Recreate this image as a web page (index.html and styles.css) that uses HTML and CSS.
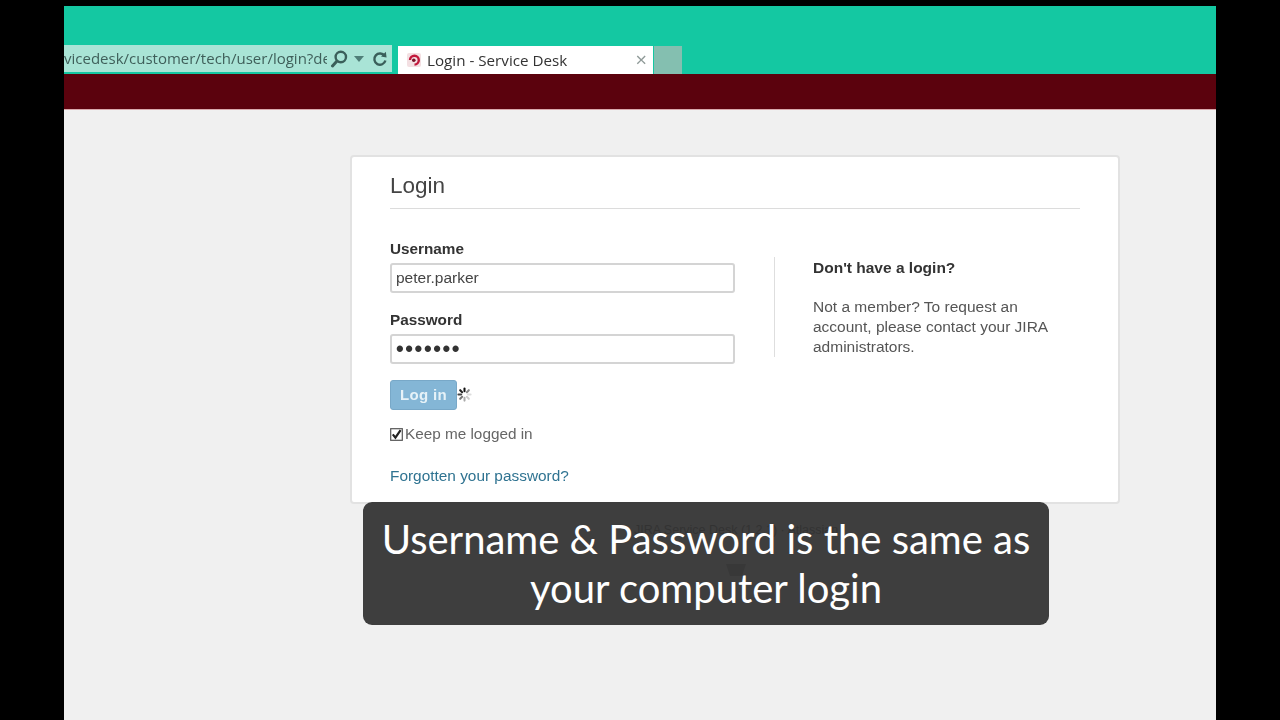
FILE: index.html
```html
<!DOCTYPE html>
<html lang="en">
<head>
<meta charset="utf-8">
<title>Login - Service Desk</title>
<link rel="stylesheet" href="styles.css">
</head>
<body>
<div class="frame">
  <header class="chrome">
    <div class="address">
      <span class="url">vicedesk/customer/tech/user/login?de</span>
      <svg class="ico search" viewBox="0 0 18 18"><circle cx="10.8" cy="7" r="5.2" fill="none" stroke="#3a5f5a" stroke-width="2.4"/><path d="M7 11 L2.5 16" stroke="#3a5f5a" stroke-width="3" stroke-linecap="round"/></svg>
      <svg class="ico caret" viewBox="0 0 10 6"><path d="M0 0 H10 L5 6 Z" fill="#4f7f78"/></svg>
      <svg class="ico reload" viewBox="0 0 16 16"><path d="M12.6 5 A5.6 5.6 0 1 0 13.4 9.5" fill="none" stroke="#3a5f5a" stroke-width="2.4"/><path d="M9 5.6 L14.6 6.4 L13.8 0.8 Z" fill="#3a5f5a"/></svg>
    </div>
    <div class="tab">
      <svg class="favicon" viewBox="0 0 14 14"><rect width="14" height="14" rx="2" fill="#f3dfe2"/><path d="M3 7 A4.4 4.4 0 1 1 7.5 11.6" fill="none" stroke="#c2183c" stroke-width="2.4"/><circle cx="6.8" cy="7.2" r="1.8" fill="#7a1228"/></svg>
      <span class="tab-title">Login - Service Desk</span>
      <span class="tab-close">×</span>
    </div>
    <div class="new-tab"></div>
  </header>
  <div class="brandbar"></div>
  <main class="page">
    <section class="card">
      <h1 class="title">Login</h1>
      <div class="columns">
        <form class="form">
          <label class="label">Username</label>
          <div class="input">peter.parker</div>
          <label class="label label-pw">Password</label>
          <div class="input dots">•••••••</div>
          <div class="actions">
            <span class="btn">Log in</span>
            <svg class="spinner" viewBox="0 0 16 16">
              <g stroke-width="2.2" stroke-linecap="round">
                <path d="M8 1.5 V4.5" stroke="#111"/>
                <path d="M3.4 3.4 L5.5 5.5" stroke="#222"/>
                <path d="M1.5 8 H4.5" stroke="#444"/>
                <path d="M3.4 12.6 L5.5 10.5" stroke="#777"/>
                <path d="M8 14.5 V11.5" stroke="#aaa"/>
                <path d="M12.6 12.6 L10.5 10.5" stroke="#ccc"/>
                <path d="M14.5 8 H11.5" stroke="#ddd"/>
                <path d="M12.6 3.4 L10.5 5.5" stroke="#888"/>
              </g>
            </svg>
          </div>
          <div class="keep">
            <svg class="check" viewBox="0 0 13 13"><rect x="0.7" y="0.7" width="11.6" height="11.6" fill="#fff" stroke="#555" stroke-width="1.2"/><path d="M2.8 6.4 L5.4 9.6 L10.6 2.2" fill="none" stroke="#222" stroke-width="2.2"/></svg>
            <span>Keep me logged in</span>
          </div>
          <a class="forgot">Forgotten your password?</a>
        </form>
        <aside class="side">
          <h2 class="side-h">Don't have a login?</h2>
          <p class="side-p">Not a member? To request an account, please contact your JIRA administrators.</p>
        </aside>
      </div>
    </section>
    <div class="footer-text">JIRA Service Desk (1.2.1) · Atlassian</div>
    <svg class="footer-logo" viewBox="0 0 24 16"><path d="M2 2 H22 L18 14 H6 Z" fill="#888"/></svg>
    <div class="caption">Username &amp; Password is the same as your computer login</div>
  </main>
</div>
</body>
</html>
```

FILE: styles.css
```css
* { box-sizing: border-box; }
html, body { margin: 0; height: 100%; }
body { background: #000; overflow: hidden; font-family: "Liberation Sans", Arial, sans-serif; }
.frame { margin: 0 64px; height: 720px; padding-top: 6px; display: flex; flex-direction: column; position: relative; }

.chrome { height: 68px; background: #14c8a2; display: flex; align-items: flex-end; flex: none; filter: blur(0.35px); }
.address { width: 328px; height: 27px; margin-bottom: 2px; background: #a9e4d6; display: flex; align-items: center; overflow: hidden; font-family: "Open Sans", sans-serif; }
.url { width: 263px; flex: none; overflow: hidden; white-space: nowrap; font-size: 15px; line-height: 27px; height: 27px; color: #3f5f5a; }
.ico { flex: none; display: block; }
.search { width: 18px; height: 18px; margin-left: 3px; }
.caret { width: 10px; height: 6px; margin-left: 6px; }
.reload { width: 16px; height: 16px; margin-left: 8px; }

.tab { width: 255px; height: 28px; margin-left: 6px; background: #fff; display: flex; align-items: center; padding: 0 6px 0 9px; font-family: "Open Sans", sans-serif; }
.favicon { width: 14px; height: 14px; flex: none; }
.tab-title { margin-left: 6px; font-size: 15.2px; color: #333; white-space: nowrap; flex: 1; }
.tab-close { font-size: 20px; line-height: 20px; color: #8f9a98; }
.new-tab { width: 28px; height: 28px; margin-left: 1px; background: #84bfb0; }

.brandbar { height: 36px; flex: none; background: #5b020d; border-bottom: 1px solid #d9a9ac; }

.page { flex: 1; background: #f0f0f0; position: relative; padding: 45px 96px 0 286px; }
.card { width: 770px; height: 349px; background: #fff; border: 2px solid #e2e2e2; border-radius: 4px; padding: 0 38px; filter: blur(0.35px); }
.title { margin: 0; height: 52px; padding-top: 15px; font-size: 22.5px; line-height: 27px; font-weight: 400; color: #444; border-bottom: 1px solid #dcdcdc; }

.columns { display: flex; padding-top: 32px; align-items: flex-start; }
.form { width: 384px; flex: none; display: flex; flex-direction: column; align-items: flex-start; }
.label { font-size: 15.3px; line-height: 16px; font-weight: 700; color: #333; }
.label-pw { margin-top: 19px; }
.input { width: 345px; height: 30px; margin-top: 6px; border: 2px solid #d4d4d4; border-radius: 3px; background: #fff; padding: 0 4px; font-size: 15.5px; line-height: 26px; color: #444; }
.dots { font-size: 22px; letter-spacing: 1.6px; color: #333; font-weight: 700; }

.actions { display: flex; align-items: center; margin-top: 16px; height: 30px; }
.btn { width: 67px; height: 30px; background: #84b6d6; border: 1px solid #78a8c8; border-radius: 3px; color: #e6f2f8; font-size: 15px; line-height: 28px; font-weight: 700; text-align: center; letter-spacing: 0.3px; }
.spinner { width: 15px; height: 15px; margin-bottom: 2px; }

.keep { display: flex; align-items: center; margin-top: 16px; font-size: 15.3px; line-height: 16px; color: #666; gap: 2px; }
.check { width: 13px; height: 13px; flex: none; }
.forgot { margin-top: 26px; font-size: 15.4px; line-height: 16px; color: #2f7391; }

.side { margin-top: 16px; height: 100px; border-left: 1px solid #dedede; padding: 3px 0 0 38px; width: 300px; }
.side-h { margin: 0; font-size: 15.5px; line-height: 16px; font-weight: 700; color: #333; }
.side-p { margin: 21px 0 0; width: 240px; font-size: 15.5px; line-height: 20px; color: #555; }

.footer-text { position: absolute; left: 570px; top: 413px; font-size: 12.5px; line-height: 14px; color: #222; white-space: nowrap; }
.footer-logo { position: absolute; left: 660px; top: 452px; width: 24px; height: 16px; }
.caption { position: absolute; left: 299px; top: 392px; width: 686px; height: 123px; background: rgba(52, 52, 52, 0.95); border-radius: 9px; padding: 13px 10px 0; color: #fff; font-family: Lato, sans-serif; font-size: 40px; line-height: 49px; text-align: center; }
```
